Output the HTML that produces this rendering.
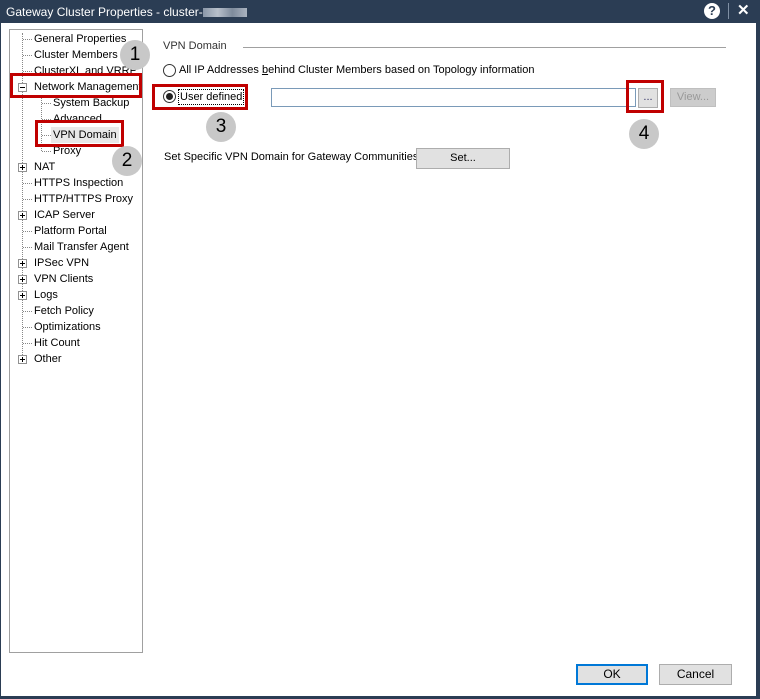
<!DOCTYPE html>
<html><head><meta charset="utf-8"><style>
*{margin:0;padding:0;box-sizing:border-box}
body{width:760px;height:699px;background:#2b3d54;font-family:"Liberation Sans",Arial,sans-serif;font-size:11px;color:#000;position:relative;overflow:hidden}
.a{position:absolute;white-space:nowrap}
#win{position:absolute;left:1px;top:23px;width:755px;height:673px;background:#fff}
.t{position:absolute;line-height:16px;white-space:nowrap}
.pm{position:absolute;width:9px;height:9px;border:1px solid #919191;background:#fff}
.pm:before{content:"";position:absolute;left:1px;top:3px;width:5px;height:1px;background:#000}
.pm.p:after{content:"";position:absolute;left:3px;top:1px;width:1px;height:5px;background:#000}
.dh{position:absolute;height:1px;border-top:1px dotted #888}
.dv{position:absolute;width:1px;border-left:1px dotted #888}
.red{position:absolute;border:3px solid #c00000}
.c{position:absolute;width:30px;height:30px;border-radius:50%;background:#c8c8c8;text-align:center;line-height:30px;font-size:19px}
.btn{position:absolute;background:#e1e1e1;border:1px solid #adadad;text-align:center}
</style></head><body>
<div class="a" style="left:6px;top:5px;color:#fff;font-size:12px">Gateway Cluster Properties - cluster-<span style="display:inline-block;width:44px;height:9px;background:linear-gradient(90deg,#8a97a8,#b8c0cb,#7e8b9c,#aab3bf);vertical-align:middle"></span></div>
<div class="a" style="left:704px;top:3px;width:16px;height:16px;border-radius:50%;background:#fff;color:#2b3d54;font-weight:bold;font-size:13px;text-align:center;line-height:16px">?</div>
<div class="a" style="left:728px;top:3px;width:1px;height:16px;background:#8090a4"></div>
<div class="a" style="left:737px;top:1px;color:#fff;font-weight:bold;font-size:15px">✕</div>
<div id="win"></div>
<div class="a" style="left:9px;top:29px;width:134px;height:624px;border:1px solid #a0a0a0;background:#fff"></div>
<div class="dv" style="left:22px;top:33px;height:326px"></div>
<div class="dv" style="left:41px;top:95px;height:56px"></div>
<div class="dh" style="left:23px;top:39px;width:9px"></div>
<div class="dh" style="left:23px;top:55px;width:9px"></div>
<div class="dh" style="left:23px;top:71px;width:9px"></div>
<div class="dh" style="left:42px;top:103px;width:9px"></div>
<div class="dh" style="left:42px;top:119px;width:9px"></div>
<div class="dh" style="left:42px;top:135px;width:9px"></div>
<div class="dh" style="left:42px;top:151px;width:9px"></div>
<div class="dh" style="left:23px;top:183px;width:9px"></div>
<div class="dh" style="left:23px;top:199px;width:9px"></div>
<div class="dh" style="left:23px;top:231px;width:9px"></div>
<div class="dh" style="left:23px;top:247px;width:9px"></div>
<div class="dh" style="left:23px;top:311px;width:9px"></div>
<div class="dh" style="left:23px;top:327px;width:9px"></div>
<div class="dh" style="left:23px;top:343px;width:9px"></div>
<div class="pm" style="left:18px;top:83px"></div>
<div class="pm p" style="left:18px;top:163px"></div>
<div class="pm p" style="left:18px;top:211px"></div>
<div class="pm p" style="left:18px;top:259px"></div>
<div class="pm p" style="left:18px;top:275px"></div>
<div class="pm p" style="left:18px;top:291px"></div>
<div class="pm p" style="left:18px;top:355px"></div>
<div class="t" style="left:34px;top:31px">General Properties</div>
<div class="t" style="left:34px;top:47px">Cluster Members</div>
<div class="t" style="left:34px;top:63px">ClusterXL and VRRP</div>
<div class="t" style="left:34px;top:79px">Network Management</div>
<div class="t" style="left:53px;top:95px">System Backup</div>
<div class="t" style="left:53px;top:111px">Advanced</div>
<div class="t" style="left:51px;top:127px;background:#e8e8e8;padding:0 2px">VPN Domain</div>
<div class="t" style="left:53px;top:143px">Proxy</div>
<div class="t" style="left:34px;top:159px">NAT</div>
<div class="t" style="left:34px;top:175px">HTTPS Inspection</div>
<div class="t" style="left:34px;top:191px">HTTP/HTTPS Proxy</div>
<div class="t" style="left:34px;top:207px">ICAP Server</div>
<div class="t" style="left:34px;top:223px">Platform Portal</div>
<div class="t" style="left:34px;top:239px">Mail Transfer Agent</div>
<div class="t" style="left:34px;top:255px">IPSec VPN</div>
<div class="t" style="left:34px;top:271px">VPN Clients</div>
<div class="t" style="left:34px;top:287px">Logs</div>
<div class="t" style="left:34px;top:303px">Fetch Policy</div>
<div class="t" style="left:34px;top:319px">Optimizations</div>
<div class="t" style="left:34px;top:335px">Hit Count</div>
<div class="t" style="left:34px;top:351px">Other</div>
<div class="a" style="left:163px;top:40px;color:#333">VPN Domain</div>
<div class="a" style="left:243px;top:47px;width:483px;height:1px;background:#a0a0a0"></div>
<div class="a" style="left:163px;top:64px;width:13px;height:13px;border:1px solid #333;border-radius:50%"></div>
<div class="a" style="left:179px;top:64px">All IP Addresses <u>b</u>ehind Cluster Members based on Topology information</div>
<div class="a" style="left:163px;top:90px;width:13px;height:13px;border:1px solid #333;border-radius:50%"></div>
<div class="a" style="left:166px;top:93px;width:7px;height:7px;background:#222;border-radius:50%"></div>
<div class="a" style="left:178px;top:89px;border:1px dotted #000;padding:0 1px;line-height:14px">User defined</div>
<div class="a" style="left:271px;top:88px;width:365px;height:19px;border:1px solid #7a9ab8"></div>
<div class="btn" style="left:638px;top:88px;width:20px;height:20px;line-height:17px;color:#336">...</div>
<div class="btn" style="left:670px;top:88px;width:46px;height:19px;background:#cccccc;border-color:#bfbfbf;color:#999;line-height:17px">View...</div>
<div class="a" style="left:164px;top:151px">Set Specific VPN Domain for Gateway Communities:</div>
<div class="btn" style="left:416px;top:148px;width:94px;height:21px;line-height:19px">Set...</div>
<div class="btn" style="left:576px;top:664px;width:72px;height:21px;border:2px solid #0078d7;line-height:17px;font-size:12px">OK</div>
<div class="btn" style="left:659px;top:664px;width:73px;height:21px;line-height:19px;font-size:12px">Cancel</div>
<div class="red" style="left:10px;top:73px;width:132px;height:25px"></div>
<div class="red" style="left:35px;top:120px;width:89px;height:27px"></div>
<div class="red" style="left:152px;top:84px;width:96px;height:26px"></div>
<div class="red" style="left:626px;top:80px;width:38px;height:33px"></div>
<div class="c" style="left:120px;top:40px">1</div>
<div class="c" style="left:112px;top:146px">2</div>
<div class="c" style="left:206px;top:112px">3</div>
<div class="c" style="left:629px;top:119px">4</div>
</body></html>
